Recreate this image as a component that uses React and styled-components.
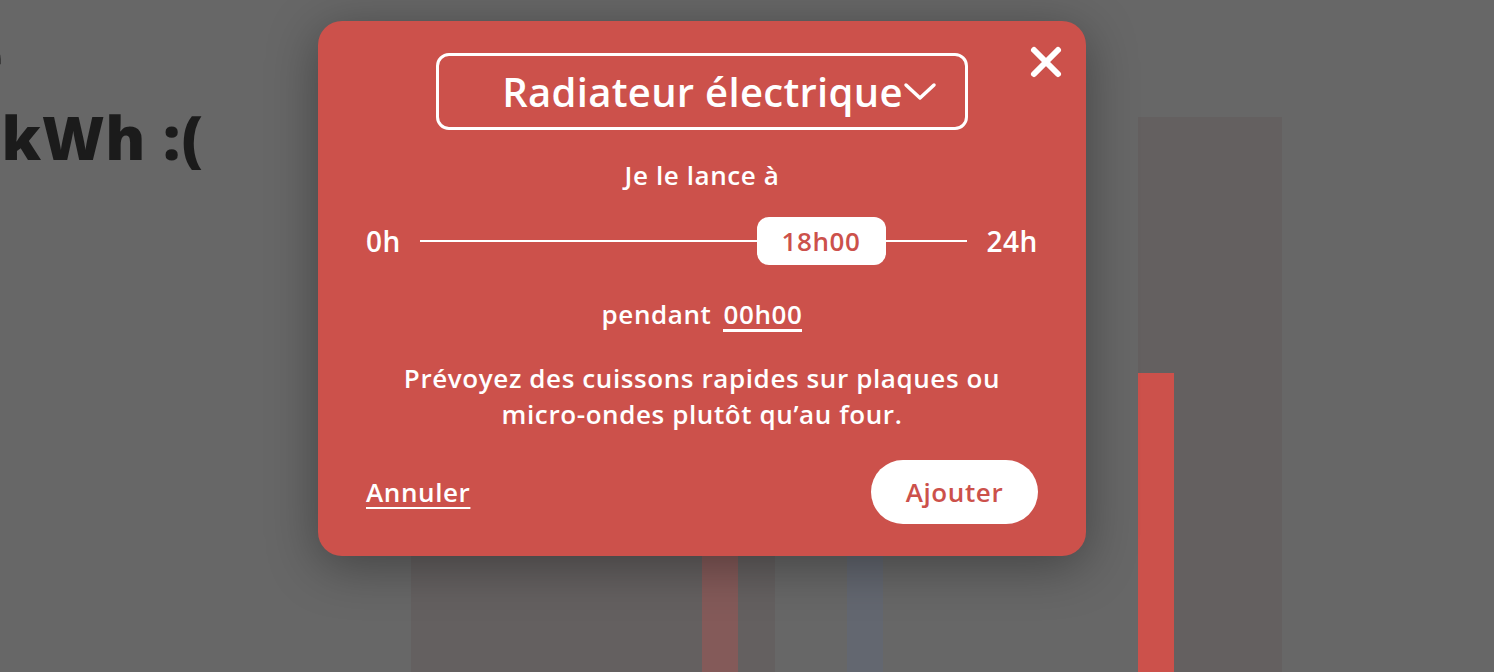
import styled, { createGlobalStyle } from 'styled-components';

const GlobalStyle = createGlobalStyle`
  html, body {
    margin: 0;
    padding: 0;
  }
  body {
    font-family: "Open Sans", "Noto Sans", sans-serif;
    background: #676767;
    overflow: hidden;
  }
`;

const Page = styled.div`
  position: relative;
  width: 1494px;
  height: 672px;
  overflow: hidden;
  background: #676767;
  display: flex;
`;

const Intro = styled.div`
  width: 204px;
  flex-shrink: 0;
  padding-top: 14px;
  display: flex;
  flex-direction: column;
`;

const HeadLine = styled.div`
  width: ${(p) => p.$edge}px;
  display: flex;
  justify-content: flex-end;
  white-space: nowrap;
  font-size: 60px;
  font-weight: 800;
  letter-spacing: 1px;
  line-height: 82px;
  color: #1b1b1b;
`;

const Chart = styled.div`
  flex: 1;
  display: flex;
  align-items: flex-end;
  padding-left: 207px;
`;

const Zone = styled.div`
  width: ${(p) => p.$w}px;
  height: ${(p) => p.$h}px;
  margin-left: ${(p) => p.$ml || 0}px;
  flex-shrink: 0;
  background: #646060;
  display: flex;
  align-items: flex-end;
  justify-content: ${(p) => (p.$end ? 'flex-end' : 'flex-start')};
  padding-right: ${(p) => p.$pr || 0}px;
  box-sizing: border-box;
`;

const tones = {
  faded: '#845a59',
  blue: '#636770',
  red: '#cc514b',
};

const Bar = styled.div`
  width: 36px;
  height: ${(p) => p.$h}px;
  margin-left: ${(p) => p.$ml || 0}px;
  flex-shrink: 0;
  background: ${(p) => tones[p.$tone]};
`;

const Overlay = styled.div`
  position: absolute;
  inset: 0;
  padding: 21px 0 0 318px;
`;

const Modal = styled.div`
  position: relative;
  width: 768px;
  box-sizing: border-box;
  padding: 32px 48px 32px;
  background: #cc514b;
  border-radius: 24px;
  box-shadow: 0 10px 50px rgba(0, 0, 0, 0.35);
  color: #fff;
  display: flex;
  flex-direction: column;
  align-items: center;
  font-weight: 560;
  letter-spacing: 0.6px;
`;

const CloseButton = styled.button`
  position: absolute;
  top: 23px;
  right: 22px;
  width: 36px;
  height: 36px;
  padding: 0;
  border: none;
  background: transparent;
  cursor: pointer;
  display: flex;
  align-items: center;
  justify-content: center;
`;

const Select = styled.button`
  width: 532px;
  height: 77px;
  box-sizing: border-box;
  border: 3px solid #fff;
  border-radius: 13px;
  background: transparent;
  color: #fff;
  font-family: inherit;
  font-size: 40px;
  font-weight: 560;
  letter-spacing: 0.3px;
  display: flex;
  align-items: center;
  justify-content: center;
  padding: 0 20px 0 55px;
  cursor: pointer;
`;

const Label = styled.div`
  margin-top: ${(p) => p.$mt || 0}px;
  font-size: 26px;
  line-height: 32px;
`;

const SliderRow = styled.div`
  margin-top: 26px;
  width: 100%;
  display: flex;
  align-items: center;
  gap: 19px;
  font-size: 28px;
  font-weight: 600;
`;

const Track = styled.div`
  position: relative;
  flex: 1;
  height: 48px;
  display: flex;
  align-items: center;

  &::before {
    content: '';
    width: 100%;
    height: 2px;
    background: #fff;
  }
`;

const Thumb = styled.div`
  position: absolute;
  top: 0;
  width: 129px;
  height: 48px;
  border-radius: 12px;
  background: #fff;
  color: #cc514b;
  font-size: 26px;
  display: flex;
  align-items: center;
  justify-content: center;
`;

const DurationRow = styled.div`
  margin-top: 31px;
  display: flex;
  align-items: baseline;
  gap: 12px;
  font-size: 26px;
  line-height: 36px;
`;

const Duration = styled.span`
  border-bottom: 3px solid #fff;
  line-height: 30px;
`;

const Advice = styled.p`
  margin: 28px 0 0;
  font-size: 26px;
  line-height: 36px;
  text-align: center;
`;

const Footer = styled.div`
  margin-top: 28px;
  width: 100%;
  display: flex;
  align-items: center;
  justify-content: space-between;
`;

const CancelLink = styled.a`
  color: #fff;
  font-size: 26px;
  text-decoration: underline;
  text-underline-offset: 5px;
  text-decoration-thickness: 2px;
  cursor: pointer;
`;

const AddButton = styled.button`
  width: 167px;
  height: 64px;
  border: none;
  border-radius: 32px;
  background: #fff;
  color: #cc514b;
  font-family: inherit;
  font-size: 26px;
  font-weight: 560;
  letter-spacing: 0.6px;
  cursor: pointer;
`;

function CloseIcon() {
  return (
    <svg width="34" height="34" viewBox="0 0 34 34">
      <path
        d="M5 5 L29 29 M29 5 L5 29"
        stroke="#fff"
        strokeWidth="6"
        strokeLinecap="round"
      />
    </svg>
  );
}

function Chevron() {
  return (
    <svg width="34" height="20" viewBox="0 0 34 20">
      <path
        d="M3 3 L17 16 L31 3"
        fill="none"
        stroke="#fff"
        strokeWidth="3.5"
        strokeLinecap="round"
        strokeLinejoin="round"
      />
    </svg>
  );
}

export default function App() {
  const start = 18;
  const pct = (start / 24) * 100;

  return (
    <Page>
      <GlobalStyle />
      <Intro>
        <HeadLine $edge={4}>Votre consommation estimée</HeadLine>
        <HeadLine $edge={204}>est de 13,2 kWh :(</HeadLine>
      </Intro>
      <Chart>
        <Zone $w={364} $h={380} $end $pr={37}>
          <Bar $tone="faded" $h={380} />
        </Zone>
        <Bar $tone="blue" $h={320} $ml={72} />
        <Zone $w={144} $h={555} $ml={255}>
          <Bar $tone="red" $h={299} />
        </Zone>
      </Chart>

      <Overlay>
        <Modal>
          <CloseButton aria-label="Fermer">
            <CloseIcon />
          </CloseButton>
          <Select>
            Radiateur électrique
            <Chevron />
          </Select>
          <Label $mt={29}>Je le lance à</Label>
          <SliderRow>
            <span>0h</span>
            <Track>
              <Thumb style={{ left: `calc(${pct}% - 74px)` }}>18h00</Thumb>
            </Track>
            <span>24h</span>
          </SliderRow>
          <DurationRow>
            pendant <Duration>00h00</Duration>
          </DurationRow>
          <Advice>
            Prévoyez des cuissons rapides sur plaques ou
            <br />
            micro-ondes plutôt qu’au four.
          </Advice>
          <Footer>
            <CancelLink>Annuler</CancelLink>
            <AddButton>Ajouter</AddButton>
          </Footer>
        </Modal>
      </Overlay>
    </Page>
  );
}
